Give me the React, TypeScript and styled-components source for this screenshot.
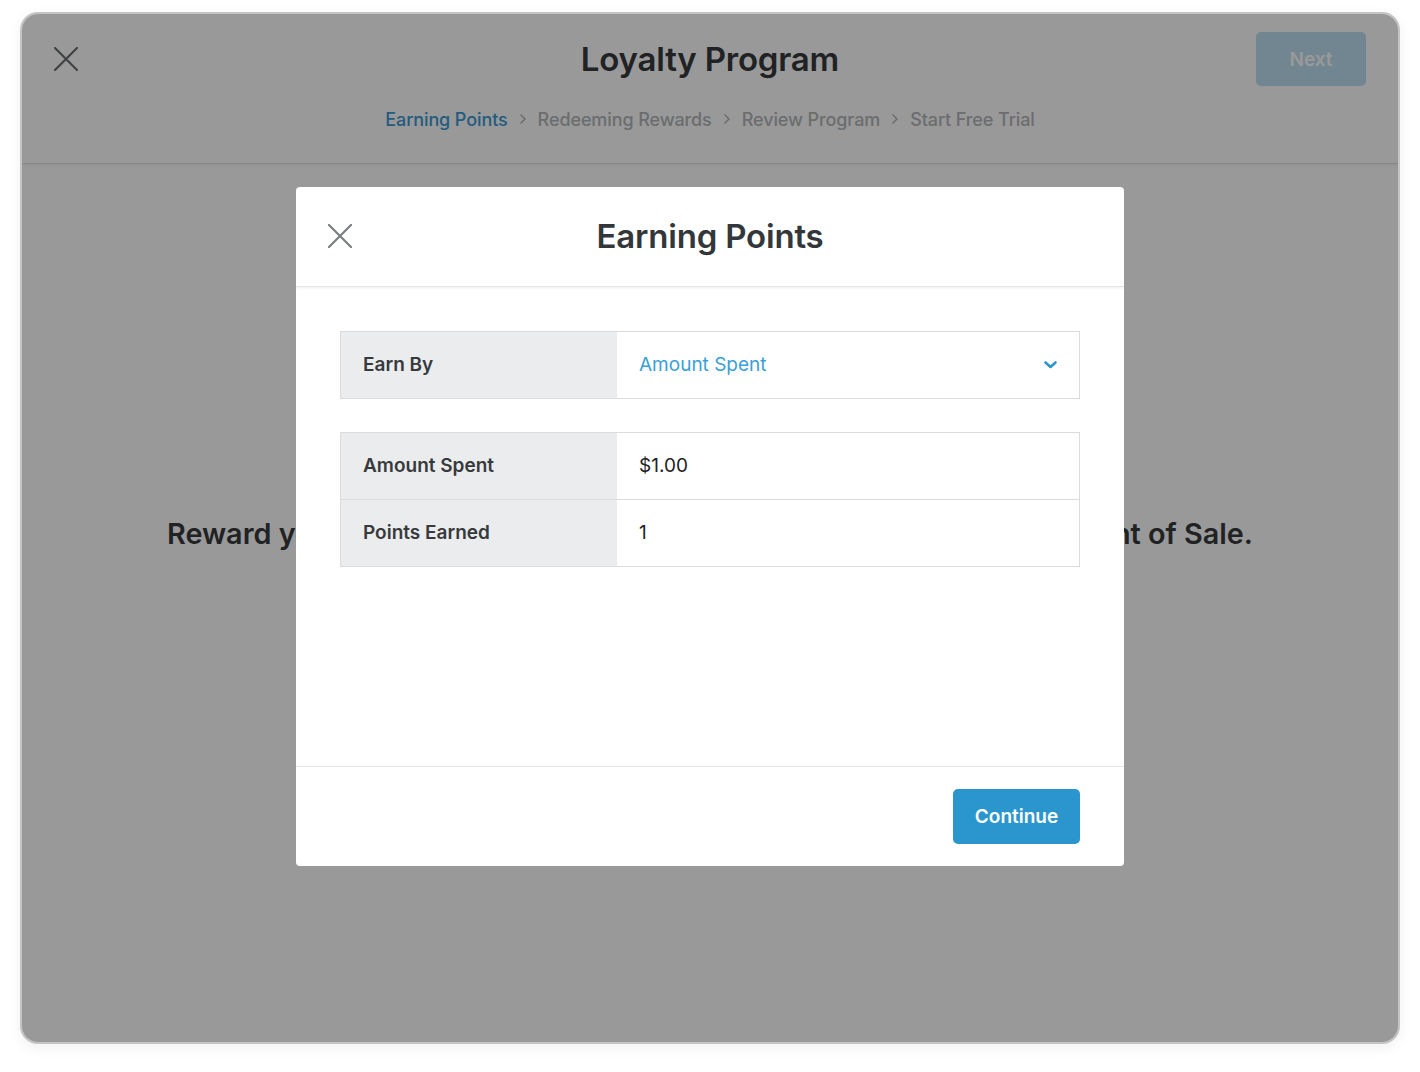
import React from "react";
import styled, { createGlobalStyle } from "styled-components";

const GlobalStyle = createGlobalStyle`
  *, *::before, *::after {
    box-sizing: border-box;
  }
  html, body {
    margin: 0;
    padding: 0;
    background: #ffffff;
  }
  body {
    font-family: Inter, "Noto Sans", "Liberation Sans", sans-serif;
    color: #373a3c;
  }
`;

const Page = styled.div`
  width: 1420px;
  height: 1072px;
  padding: 12px 20px 28px;
`;

const Window = styled.div`
  position: relative;
  height: 100%;
  border: 2px solid #c4c4c4;
  border-radius: 18px;
  background: #ffffff;
  box-shadow: 0 4px 14px rgba(0, 0, 0, 0.06);
  overflow: hidden;
  display: flex;
  flex-direction: column;
`;

const Header = styled.header`
  display: flex;
  flex-direction: column;
  align-items: center;
  padding: 18px 32px 0;
  height: 150px;
  flex: none;
  border-bottom: 1px solid #e2e2e2;
  box-shadow: 0 1px 3px rgba(0, 0, 0, 0.08);
`;

const TopRow = styled.div`
  width: 100%;
  height: 54px;
  display: grid;
  grid-template-columns: 1fr auto 1fr;
  align-items: center;
`;

const CloseButton = styled.button<{ $tone: string }>`
  justify-self: start;
  width: 28px;
  height: 28px;
  padding: 0;
  margin: 0 0 0 -2px;
  border: 0;
  background: none;
  color: ${(p) => p.$tone};
  display: flex;
  align-items: center;
  justify-content: center;
`;

const Title = styled.h1`
  margin: 0;
  font-size: 33px;
  font-weight: 600;
  letter-spacing: -0.2px;
  color: #373a3c;
`;

const NextButton = styled.button`
  justify-self: end;
  width: 110px;
  height: 54px;
  border: 0;
  border-radius: 5px;
  background: #bcdff1;
  color: #ffffff;
  font-family: inherit;
  font-size: 19px;
  font-weight: 600;
`;

const Breadcrumbs = styled.nav`
  margin-top: 21px;
  display: flex;
  align-items: center;
  gap: 12px;
  height: 24px;
`;

const Crumb = styled.span<{ $active?: boolean }>`
  font-size: 18px;
  font-weight: 500;
  letter-spacing: -0.1px;
  color: ${(p) => (p.$active ? "#3a9ad3" : "#b3b6b8")};
`;

const Body = styled.main`
  flex: 1;
  padding-top: 352px;
  display: flex;
  justify-content: center;
`;

const Lead = styled.p`
  margin: 0;
  font-size: 28.8px;
  line-height: 36px;
  font-weight: 600;
  color: #373a3c;
  white-space: nowrap;
`;

const Overlay = styled.div`
  position: absolute;
  inset: 0;
  background: rgba(0, 0, 0, 0.4);
  display: flex;
  align-items: center;
  justify-content: center;
`;

const Modal = styled.div`
  width: 828px;
  height: 679px;
  margin-top: -4px;
  background: #ffffff;
  border-radius: 4px;
  display: flex;
  flex-direction: column;
  overflow: hidden;
`;

const ModalHeader = styled.div`
  height: 100px;
  flex: none;
  display: grid;
  grid-template-columns: 1fr auto 1fr;
  align-items: center;
  padding: 0 32px;
  border-bottom: 1px solid #e4e4e4;
  box-shadow: 0 1px 3px rgba(0, 0, 0, 0.07);
`;

const ModalTitle = styled.h2`
  margin: 0;
  font-size: 33px;
  font-weight: 600;
  letter-spacing: -0.2px;
  color: #33373a;
`;

const ModalBody = styled.div`
  flex: 1;
  padding: 44px;
  display: flex;
  flex-direction: column;
  gap: 33px;
`;

const FieldGroup = styled.div`
  border: 1.5px solid #dcdcdc;
  display: flex;
  flex-direction: column;
`;

const FieldRow = styled.div`
  display: grid;
  grid-template-columns: 276px 1fr;
  height: 66px;
  & + & {
    height: 67.5px;
    border-top: 1.5px solid #dcdcdc;
  }
`;

const FieldLabel = styled.div`
  background: #ebecee;
  display: flex;
  align-items: center;
  padding-left: 22px;
  font-size: 19px;
  font-weight: 600;
  color: #373a3c;
`;

const FieldValue = styled.div<{ $accent?: boolean }>`
  display: flex;
  align-items: center;
  justify-content: space-between;
  padding: 0 22px;
  font-size: 19px;
  font-weight: 400;
  color: ${(p) => (p.$accent ? "#3a9fd6" : "#1f2224")};
`;

const ModalFooter = styled.div`
  height: 100px;
  flex: none;
  border-top: 1.5px solid #e6e6e6;
  display: flex;
  align-items: center;
  justify-content: flex-end;
  padding: 0 44px;
`;

const PrimaryButton = styled.button`
  width: 127px;
  height: 55px;
  border: 0;
  border-radius: 5px;
  background: #2b95cd;
  color: #ffffff;
  font-family: inherit;
  font-size: 19px;
  font-weight: 600;
`;

const CrossIcon = ({ size = 24 }: { size?: number }) => (
  <svg width={size} height={size} viewBox="0 0 24 24" fill="none">
    <path d="M1 1L23 23M23 1L1 23" stroke="currentColor" strokeWidth="2.2" strokeLinecap="round" />
  </svg>
);

const CrumbArrow = () => (
  <svg width="6" height="10" viewBox="0 0 6 10" fill="none">
    <path d="M1 1L5 5L1 9" stroke="#b3b6b8" strokeWidth="1.6" strokeLinecap="round" strokeLinejoin="round" />
  </svg>
);

const SelectChevron = () => (
  <svg width="13" height="8" viewBox="0 0 13 8" fill="none">
    <path d="M1.5 1.5L6.5 6L11.5 1.5" stroke="#2b95cd" strokeWidth="2.6" strokeLinecap="round" strokeLinejoin="round" />
  </svg>
);

const steps = ["Earning Points", "Redeeming Rewards", "Review Program", "Start Free Trial"];

export default function App() {
  return (
    <>
      <GlobalStyle />
      <Page>
        <Window>
          <Header>
            <TopRow>
              <CloseButton $tone="#6b6f72">
                <CrossIcon />
              </CloseButton>
              <Title>Loyalty Program</Title>
              <NextButton>Next</NextButton>
            </TopRow>
            <Breadcrumbs>
              {steps.map((step, i) => (
                <React.Fragment key={step}>
                  {i > 0 && <CrumbArrow />}
                  <Crumb $active={i === 0}>{step}</Crumb>
                </React.Fragment>
              ))}
            </Breadcrumbs>
          </Header>
          <Body>
            <Lead>Reward your customers for every visit automatically with Square Point of Sale.</Lead>
          </Body>

          <Overlay>
            <Modal>
              <ModalHeader>
                <CloseButton $tone="#7a7e81">
                  <CrossIcon />
                </CloseButton>
                <ModalTitle>Earning Points</ModalTitle>
                <span />
              </ModalHeader>
              <ModalBody>
                <FieldGroup>
                  <FieldRow>
                    <FieldLabel>Earn By</FieldLabel>
                    <FieldValue $accent>
                      Amount Spent
                      <SelectChevron />
                    </FieldValue>
                  </FieldRow>
                </FieldGroup>
                <FieldGroup>
                  <FieldRow>
                    <FieldLabel>Amount Spent</FieldLabel>
                    <FieldValue>$1.00</FieldValue>
                  </FieldRow>
                  <FieldRow>
                    <FieldLabel>Points Earned</FieldLabel>
                    <FieldValue>1</FieldValue>
                  </FieldRow>
                </FieldGroup>
              </ModalBody>
              <ModalFooter>
                <PrimaryButton>Continue</PrimaryButton>
              </ModalFooter>
            </Modal>
          </Overlay>
        </Window>
      </Page>
    </>
  );
}
